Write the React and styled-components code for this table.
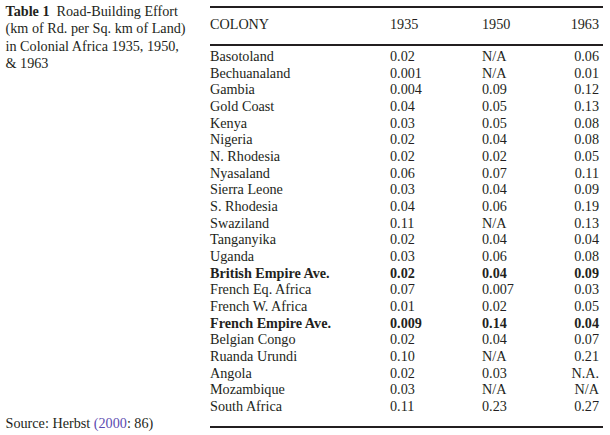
import React from "react";
import styled, { createGlobalStyle } from "styled-components";

const Global = createGlobalStyle`
  html, body { margin: 0; padding: 0; background: #ffffff; }
  body {
    font-family: "Liberation Serif", "Times New Roman", serif;
    color: #231f20;
  }
`;

const Page = styled.div`
  display: flex;
  align-items: stretch;
  width: 610px;
  height: 435px;
  box-sizing: border-box;
  font-size: 14.2px;
  line-height: 16.65px;
`;

const Side = styled.aside`
  width: 210px;
  flex: none;
  display: flex;
  flex-direction: column;
  justify-content: space-between;
  box-sizing: border-box;
  padding: 3px 0 0 5.5px;
`;

const Caption = styled.div`
  white-space: nowrap;
  line-height: 17.3px;
`;

const Label = styled.strong`
  font-weight: 700;
  margin-right: 7px;
`;

const Source = styled.div`
  white-space: nowrap;
  margin-bottom: 3px;
`;

const Cite = styled.span`
  color: #5b4ab0;
`;

const TableWrap = styled.div`
  width: 393px;
  padding-top: 6px;
  flex: none;
`;

const Table = styled.table`
  width: 393px;
  table-layout: fixed;
  border-collapse: collapse;
  border-top: 2px solid #231f20;
  border-bottom: 2px solid #231f20;
`;

const Th = styled.th`
  font-weight: 400;
  text-align: ${(p) => (p.$right ? "right" : "left")};
  padding: 8px ${(p) => (p.$right ? "4px" : "0")} 11px 0;
  width: ${(p) => (p.$w ? `${p.$w}px` : "auto")};
  border-bottom: 2px solid #231f20;
  white-space: nowrap;
`;

const Tbody = styled.tbody`
  tr:first-child td { padding-top: 2.5px; }
  tr:last-child td { padding-bottom: 11px; }
`;

const Td = styled.td`
  padding: 0 ${(p) => (p.$right ? "4px" : "0")} 0 0;
  text-align: ${(p) => (p.$right ? "right" : "left")};
  font-weight: ${(p) => (p.$bold ? 700 : 400)};
  white-space: nowrap;
`;

const rows = [
  ["Basotoland", "0.02", "N/A", "0.06"],
  ["Bechuanaland", "0.001", "N/A", "0.01"],
  ["Gambia", "0.004", "0.09", "0.12"],
  ["Gold Coast", "0.04", "0.05", "0.13"],
  ["Kenya", "0.03", "0.05", "0.08"],
  ["Nigeria", "0.02", "0.04", "0.08"],
  ["N. Rhodesia", "0.02", "0.02", "0.05"],
  ["Nyasaland", "0.06", "0.07", "0.11"],
  ["Sierra Leone", "0.03", "0.04", "0.09"],
  ["S. Rhodesia", "0.04", "0.06", "0.19"],
  ["Swaziland", "0.11", "N/A", "0.13"],
  ["Tanganyika", "0.02", "0.04", "0.04"],
  ["Uganda", "0.03", "0.06", "0.08"],
  ["British Empire Ave.", "0.02", "0.04", "0.09", true],
  ["French Eq. Africa", "0.07", "0.007", "0.03"],
  ["French W. Africa", "0.01", "0.02", "0.05"],
  ["French Empire Ave.", "0.009", "0.14", "0.04", true],
  ["Belgian Congo", "0.02", "0.04", "0.07"],
  ["Ruanda Urundi", "0.10", "N/A", "0.21"],
  ["Angola", "0.02", "0.03", "N.A."],
  ["Mozambique", "0.03", "N/A", "N/A"],
  ["South Africa", "0.11", "0.23", "0.27"],
];

export default function App() {
  return (
    <>
      <Global />
      <Page>
        <Side>
          <Caption>
            <Label>Table 1</Label>Road-Building Effort
            <br />
            (km of Rd. per Sq. km of Land)
            <br />
            in Colonial Africa 1935, 1950,
            <br />
            &amp; 1963
          </Caption>
          <Source>
            Source: Herbst <Cite>(2000</Cite>: 86)
          </Source>
        </Side>
        <TableWrap>
          <Table>
            <thead>
              <tr>
                <Th $w={180}>COLONY</Th>
                <Th $w={92}>1935</Th>
                <Th $w={88}>1950</Th>
                <Th $right>1963</Th>
              </tr>
            </thead>
            <Tbody>
              {rows.map(([name, a, b, c, bold]) => (
                <tr key={name}>
                  <Td $bold={bold}>{name}</Td>
                  <Td $bold={bold}>{a}</Td>
                  <Td $bold={bold}>{b}</Td>
                  <Td $bold={bold} $right>
                    {c}
                  </Td>
                </tr>
              ))}
            </Tbody>
          </Table>
        </TableWrap>
      </Page>
    </>
  );
}
